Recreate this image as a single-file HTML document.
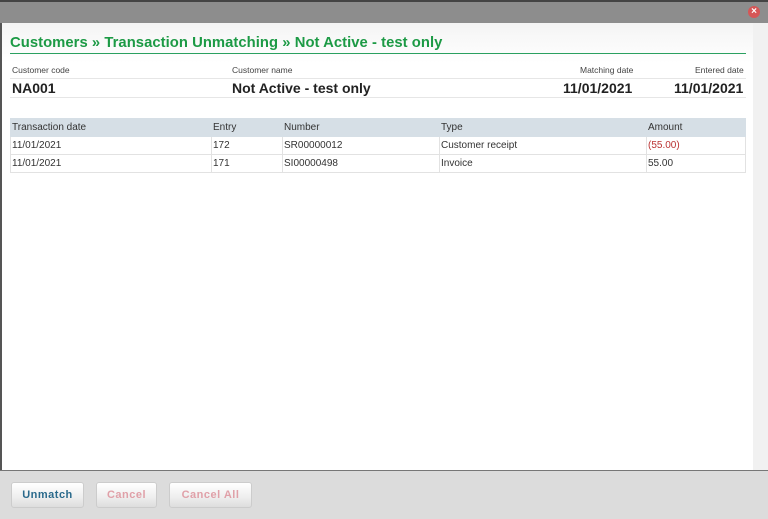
<!DOCTYPE html>
<html><head><style>
body{margin:0;width:768px;height:518px;overflow:hidden;background:#fff;font-family:"Liberation Sans",sans-serif;position:relative}
.top{position:absolute;left:0;top:0;width:768px;height:2px;background:#444}
.bar{position:absolute;left:0;top:2px;width:768px;height:21px;background:#8d8d8d}
.close{position:absolute;left:748px;top:6px;width:12px;height:12px;border-radius:50%;background:#d65656;color:#fff;font-size:10px;line-height:12px;text-align:center;font-weight:bold}
.lb{position:absolute;left:0;top:0;width:2px;height:518px;background:#555}
.content{position:absolute;left:2px;top:23px;width:751px;height:448px;background:linear-gradient(#f4f4f4,#fff 40px)}
.sb{position:absolute;left:753px;top:23px;width:15px;height:448px;background:#f1f1f1}
h1{position:absolute;left:10px;top:35px;margin:0;font-size:14.8px;color:#1c9a45;font-weight:bold;white-space:nowrap;letter-spacing:.05px}
.gl{position:absolute;left:10px;top:53px;width:736px;height:1px;background:#2aa060}
.lab{position:absolute;top:65px;font-size:8.5px;color:#444}
.val{position:absolute;top:80px;font-size:14px;font-weight:bold;color:#222}
.sep{position:absolute;left:10px;width:736px;height:1px;background:#e6e6e6}
table{position:absolute;left:10px;top:118px;width:736px;border-collapse:collapse;font-size:10px;color:#333;table-layout:fixed}
td{height:17px;padding:0 1px;border:1px solid #e2e2e2;white-space:nowrap;overflow:hidden}
tr.h td{background:#d6dfe6;border-color:#d6dfe6}
.foot{position:absolute;left:0;top:470px;width:768px;height:48px;background:#dcdcdc;border-top:1px solid #777}
.btn{position:absolute;top:482px;height:24px;border:1px solid #ccc;border-radius:3px;background:linear-gradient(#fff,#eee 60%,#ddd);font-size:11px;font-weight:bold;text-align:center;line-height:24px;letter-spacing:.5px}
</style></head><body>
<div class="lb"></div><div class="top"></div><div class="bar"></div><div class="close">×</div>
<div class="content"></div><div class="sb"></div>
<h1>Customers » Transaction Unmatching » Not Active - test only</h1>
<div class="gl"></div>
<div class="lab" style="left:12px">Customer code</div>
<div class="lab" style="left:232px">Customer name</div>
<div class="lab" style="left:580px">Matching date</div>
<div class="lab" style="left:695px">Entered date</div>
<div class="sep" style="top:78px"></div>
<div class="val" style="left:12px">NA001</div>
<div class="val" style="left:232px">Not Active - test only</div>
<div class="val" style="left:563px">11/01/2021</div>
<div class="val" style="left:674px">11/01/2021</div>
<div class="sep" style="top:97px"></div>
<table>
<colgroup><col style="width:201px"><col style="width:71px"><col style="width:157px"><col style="width:207px"><col></colgroup>
<tr class="h"><td>Transaction date</td><td>Entry</td><td>Number</td><td>Type</td><td>Amount</td></tr>
<tr><td>11/01/2021</td><td>172</td><td>SR00000012</td><td>Customer receipt</td><td style="color:#b33">(55.00)</td></tr>
<tr><td>11/01/2021</td><td>171</td><td>SI00000498</td><td>Invoice</td><td>55.00</td></tr>
</table>
<div class="foot"></div>
<div class="btn" style="left:11px;width:71px;color:#2a6a8c">Unmatch</div>
<div class="btn" style="left:96px;width:59px;color:#e0a0a8">Cancel</div>
<div class="btn" style="left:169px;width:81px;color:#e0a0a8">Cancel All</div>
</body></html>
